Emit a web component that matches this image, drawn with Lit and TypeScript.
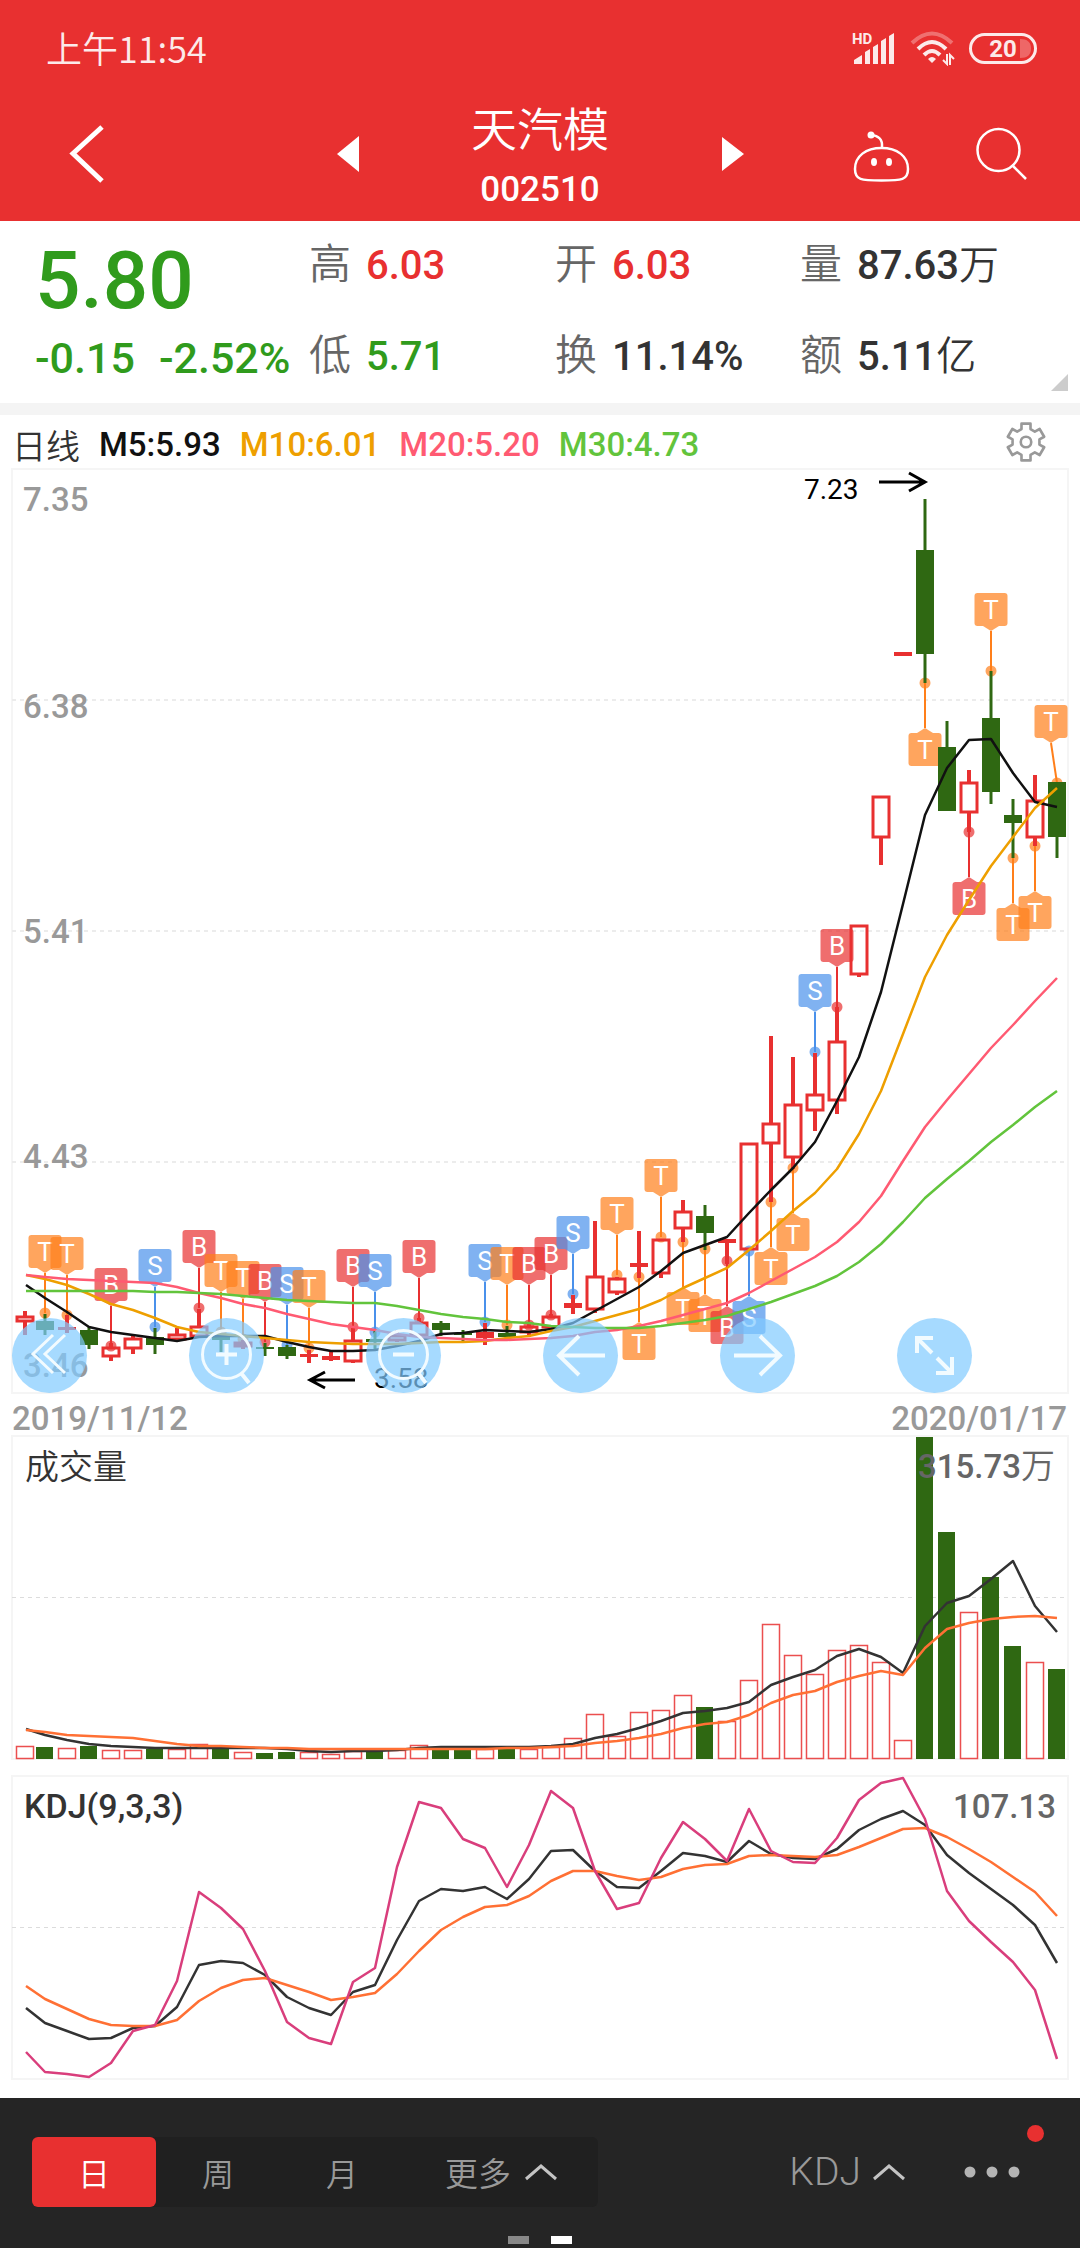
import { LitElement, html, svg, css } from "lit";
import { customElement, property, state } from "lit/decorators.js";

type Side = "up" | "down";
/** [high, body top, body bottom, low, direction, hollow] */
type Candle = [number, number, number, number, Side, boolean?];
/** [session index, letter, y of the anchor dot, flag below the candle, flag x shift] */
type Flag = [number, "T" | "S" | "B", number, boolean?, number?];

const RED = "#e83030";
const GREEN = "#2f6812";
const FLAG_COLORS = { T: "#ff7f1a", S: "#4a91eb", B: "#e83030" };

const xAt = (i: number) => (i === 0 ? 25 : 23 + 22 * i);

const CANDLES: Candle[] = [
  [1311, 1317, 1321, 1335, "up", true],
  [1314, 1321, 1330, 1335, "down"],
  [1315, 1327, 1330, 1333, "up"],
  [1327, 1330, 1345, 1349, "down"],
  [1343, 1348, 1356, 1361, "up", true],
  [1336, 1339, 1348, 1354, "up", true],
  [1328, 1337, 1345, 1354, "down"],
  [1328, 1335, 1339, 1341, "up", true],
  [1309, 1327, 1336, 1338, "up", true],
  [1333, 1336, 1340, 1352, "down"],
  [1340, 1343, 1346, 1349, "up", true],
  [1343, 1347, 1349, 1356, "down"],
  [1345, 1347, 1356, 1359, "down"],
  [1350, 1354, 1357, 1363, "up"],
  [1352, 1356, 1360, 1361, "up"],
  [1327, 1341, 1361, 1363, "up", true],
  [1330, 1339, 1342, 1350, "down"],
  [1330, 1336, 1340, 1342, "up", true],
  [1318, 1323, 1335, 1338, "up", true],
  [1321, 1323, 1330, 1336, "down"],
  [1330, 1333, 1335, 1341, "down"],
  [1323, 1332, 1338, 1345, "up"],
  [1326, 1333, 1337, 1339, "down"],
  [1322, 1327, 1332, 1337, "up", true],
  [1314, 1317, 1327, 1328, "up", true],
  [1295, 1303, 1308, 1314, "up"],
  [1221, 1277, 1309, 1313, "up", true],
  [1277, 1279, 1292, 1295, "up", true],
  [1231, 1263, 1267, 1278, "up"],
  [1239, 1240, 1273, 1278, "up", true],
  [1200, 1212, 1228, 1242, "up", true],
  [1205, 1216, 1233, 1250, "down"],
  [1240, 1239, 1243, 1264, "up"],
  [1143, 1144, 1249, 1250, "up", true],
  [1036, 1124, 1143, 1202, "up", true],
  [1057, 1105, 1157, 1169, "up", true],
  [1053, 1095, 1110, 1131, "up", true],
  [1007, 1042, 1100, 1114, "up", true],
  [925, 926, 974, 977, "up", true],
  [796, 797, 837, 865, "up", true],
  [652, 652, 656, 656, "up"],
  [499, 550, 654, 683, "down"],
  [721, 747, 811, 811, "down"],
  [770, 783, 812, 832, "up", true],
  [671, 718, 792, 804, "down"],
  [799, 815, 823, 858, "down"],
  [775, 801, 837, 846, "up", true],
  [782, 782, 837, 858, "down"],
];

const FLAGS: Flag[] = [
  [1, "T", 1313], [2, "T", 1315], [4, "B", 1346], [6, "S", 1327],
  [8, "B", 1308], [9, "T", 1332], [10, "T", 1339], [11, "B", 1342],
  [12, "S", 1345], [13, "T", 1348], [15, "B", 1327], [16, "S", 1332],
  [18, "B", 1318], [21, "S", 1322], [22, "T", 1325], [23, "B", 1325],
  [24, "B", 1315], [25, "S", 1294], [27, "T", 1275], [28, "T", 1277, true],
  [29, "T", 1237], [30, "T", 1242, true], [31, "T", 1249, true],
  [32, "B", 1261, true], [33, "S", 1251, true], [34, "T", 1202, true],
  [35, "T", 1168, true], [36, "S", 1052], [37, "B", 1007],
  [41, "T", 683, true], [43, "B", 832, true], [44, "T", 671],
  [45, "T", 858, true], [46, "T", 846, true], [47, "T", 783, false, -6],
];

const MA5 = [1285, 1298, 1312, 1327, 1332, 1335, 1338, 1341, 1337, 1336, 1336, 1336, 1342, 1347, 1351, 1351, 1350, 1346, 1341, 1334, 1333, 1330, 1331, 1332, 1329, 1323, 1311, 1299, 1287, 1271, 1253, 1245, 1237, 1213, 1190, 1168, 1142, 1101, 1057, 992, 904, 815, 768, 740, 739, 773, 802, 807];
const MA10 = [1275, 1279, 1285, 1294, 1304, 1310, 1318, 1327, 1332, 1334, 1336, 1338, 1340, 1342, 1343, 1344, 1344, 1344, 1343, 1342, 1342, 1341, 1338, 1336, 1331, 1327, 1321, 1315, 1309, 1300, 1288, 1278, 1268, 1250, 1231, 1211, 1193, 1169, 1134, 1091, 1034, 977, 935, 900, 866, 837, 808, 788];
const MA20 = [1275, 1277, 1279, 1280, 1281, 1282, 1283, 1287, 1293, 1298, 1304, 1308, 1314, 1319, 1324, 1327, 1330, 1334, 1337, 1338, 1339, 1340, 1340, 1339, 1338, 1336, 1332, 1330, 1326, 1321, 1315, 1309, 1303, 1293, 1281, 1269, 1257, 1242, 1222, 1196, 1161, 1127, 1100, 1074, 1048, 1025, 1001, 978];
const MA30 = [1291, 1291, 1291, 1291, 1291, 1291, 1292, 1292, 1293, 1294, 1296, 1298, 1300, 1301, 1302, 1303, 1303, 1306, 1310, 1314, 1317, 1319, 1322, 1323, 1326, 1327, 1328, 1328, 1328, 1326, 1323, 1320, 1316, 1309, 1302, 1294, 1286, 1276, 1262, 1244, 1222, 1198, 1179, 1161, 1142, 1125, 1107, 1091];

const VOLUME = [1746, 1747, 1748, 1746, 1750, 1750, 1749, 1749, 1744, 1749, 1752, 1753, 1752, 1752, 1754, 1751, 1751, 1750, 1745, 1750, 1750, 1749, 1749, 1749, 1747, 1738, 1714, 1736, 1712, 1710, 1695, 1707, 1721, 1680, 1624, 1655, 1674, 1650, 1645, 1662, 1740, 1437, 1532, 1612, 1577, 1646, 1662, 1669];
const VOLUME_DOWN = new Set([1, 3, 6, 9, 11, 12, 16, 19, 20, 22, 31, 41, 42, 44, 45, 47]);
const VOL_MA5 = [1729, 1735, 1740, 1744, 1746, 1747, 1748, 1748, 1748, 1748, 1748, 1748, 1749, 1751, 1752, 1751, 1751, 1750, 1748, 1747, 1747, 1747, 1747, 1747, 1746, 1744, 1738, 1734, 1728, 1721, 1713, 1711, 1708, 1702, 1685, 1677, 1670, 1656, 1649, 1657, 1673, 1626, 1603, 1596, 1579, 1561, 1606, 1632];
const VOL_MA10 = [1730, 1732, 1735, 1736, 1737, 1738, 1741, 1744, 1746, 1746, 1747, 1748, 1748, 1749, 1749, 1749, 1749, 1749, 1749, 1749, 1749, 1749, 1748, 1748, 1747, 1746, 1743, 1741, 1738, 1734, 1728, 1724, 1722, 1715, 1703, 1695, 1691, 1682, 1676, 1671, 1675, 1648, 1629, 1623, 1619, 1617, 1616, 1618];

/* KDJ samples: distance below the panel origin, in thirds of a chart unit. */
const K_LINE = [744, 790, 814, 836, 834, 804, 797, 740, 615, 603, 608, 646, 711, 744, 765, 695, 675, 540, 423, 387, 393, 381, 416, 357, 272, 270, 333, 380, 384, 333, 279, 288, 306, 243, 283, 295, 297, 267, 211, 177, 153, 195, 286, 339, 387, 435, 495, 610];
const D_LINE = [679, 718, 748, 777, 795, 798, 798, 780, 723, 684, 660, 655, 675, 696, 719, 711, 699, 643, 573, 510, 470, 441, 435, 408, 363, 333, 333, 348, 359, 350, 327, 315, 312, 288, 285, 288, 291, 285, 261, 234, 207, 204, 232, 268, 307, 350, 396, 467];
const J_LINE = [877, 936, 942, 951, 908, 812, 796, 663, 396, 444, 508, 633, 785, 834, 852, 665, 624, 322, 126, 144, 237, 264, 382, 256, 93, 145, 333, 447, 429, 294, 186, 236, 304, 147, 272, 306, 309, 234, 119, 69, 54, 177, 392, 484, 547, 606, 690, 898];
const kdj = (v: number[]) => v.map((n) => Math.round(1760 + n / 3));

const trend = (ys: number[], color: string) => svg`
  <polyline fill="none" stroke=${color} stroke-width="2.5" stroke-linejoin="round"
    points=${ys.map((y, i) => `${i ? xAt(i) : 26},${y}`).join(" ")}></polyline>`;

const sharedChart = css`
  :host { display: block; }
  svg.chart {
    display: block;
    width: 100%;
    height: auto;
    font-family: Roboto, "Noto Sans CJK SC", sans-serif;
    font-weight: 500;
    font-size: 33px;
  }
  .frame { fill: none; stroke: #f5f5f5; stroke-width: 2; }
  .dash { stroke: #ececec; stroke-width: 2; stroke-dasharray: 4 4; }
  .dash.fine { stroke: #dcdcdc; stroke-width: 1; }
  .axis { fill: #999; }
  .caption { fill: #333; font-size: 34px; }
  .cjk { font-weight: 350; font-size: 34px; }
  .peak { fill: #666; }
`;

@customElement("price-chart")
export class PriceChart extends LitElement {
  static styles = [
    sharedChart,
    css`
      :host { position: relative; }
      .mark { fill: #000; font-size: 28px; font-weight: 400; }
      .letter { fill: #fff; font-size: 26px; font-weight: 400; text-anchor: middle; }
      .arrow { fill: none; stroke: #000; stroke-width: 3; }
      .tools {
        position: absolute;
        left: 12px;
        right: 108px;
        bottom: 1px;
        display: flex;
        justify-content: space-between;
      }
      .tool {
        width: 75px;
        height: 75px;
        padding: 0;
        border: 0;
        border-radius: 50%;
        background: rgba(128, 202, 255, 0.7);
      }
      .tool svg {
        display: block;
        fill: none;
        stroke: #f2fbff;
        stroke-width: 4;
      }
      .tool .thin { stroke-width: 3; }
    `,
  ];

  private candle([high, top, bottom, low, side, hollow]: Candle, i: number) {
    const x = xAt(i);
    const color = side === "up" ? RED : GREEN;
    const wick = side === "up" ? 4 : 3;
    return svg`
      <line x1=${x} x2=${x} y1=${high} y2=${hollow ? top : low} stroke=${color} stroke-width=${wick}></line>
      ${hollow
        ? svg`<line x1=${x} x2=${x} y1=${bottom} y2=${low} stroke=${color} stroke-width=${wick}></line>
            <rect x=${x - 8} y=${top} width="16" height=${bottom - top} fill="none" stroke=${color} stroke-width="3"></rect>`
        : svg`<rect x=${x - 9} y=${top} width="18" height=${bottom - top} fill=${color}></rect>`}`;
  }

  private flag([i, letter, dot, below = false, shift = 0]: Flag) {
    const x = xAt(i);
    const cx = x + shift;
    const top = below ? dot + 50 : dot - 78;
    const edge = below ? top : top + 33;
    const tip = below ? top - 5 : top + 38;
    const color = FLAG_COLORS[letter];
    return svg`
      <line x1=${cx} y1=${tip} x2=${x} y2=${dot} stroke=${color} stroke-width="2"></line>
      <g fill=${color} fill-opacity="0.7">
        <circle cx=${x} cy=${dot} r="5.5"></circle>
        <rect x=${cx - 16.5} y=${top} width="33" height="33" rx="3"></rect>
        <path d="M${cx - 8} ${edge}L${cx} ${tip}L${cx + 8} ${edge}Z"></path>
      </g>
      <text class="letter" x=${cx} y=${top + 26}>${letter}</text>`;
  }

  private tool(label: string, art: unknown) {
    return html`<button class="tool" aria-label=${label}>
      <svg viewBox="0 0 75 75" width="75" height="75">${art}</svg>
    </button>`;
  }

  render() {
    return html`
      <svg class="chart" viewBox="0 468 1080 926" role="img" aria-label="日线">
        <rect class="frame" x="12" y="469" width="1056" height="924"></rect>
        ${[700, 931, 1162].map((y) => svg`<line class="dash" x1="12" x2="1068" y1=${y} y2=${y}></line>`)}
        ${FLAGS.map((f) => this.flag(f))}
        ${CANDLES.map((c, i) => this.candle(c, i))}
        ${trend(MA5, "#111")}${trend(MA10, "#ee9f00")}${trend(MA20, "#ff5a72")}${trend(MA30, "#62c43c")}
        <text class="axis" x="23" y="511">7.35</text>
        <text class="axis" x="23" y="718">6.38</text>
        <text class="axis" x="23" y="943">5.41</text>
        <text class="axis" x="23" y="1168">4.43</text>
        <text class="axis" x="23" y="1377">3.46</text>
        <text class="mark" x="804" y="499">7.23</text>
        <path class="arrow" d="M879 482H925M909 473L925 482L909 491"></path>
        <text class="mark" x="374" y="1388">3.58</text>
        <path class="arrow" d="M355 1380H310M325 1372L310 1380L325 1388"></path>
      </svg>
      <div class="tools">
        ${this.tool("最早", svg`<path class="thin" d="M53 17L33 36L53 55M41 17L21 36L41 55"></path>`)}
        ${this.tool("放大", svg`<circle class="thin" cx="37.5" cy="36.5" r="24"></circle><path d="M27 36.5H48M37.5 26V47M52 55L60 65"></path>`)}
        ${this.tool("缩小", svg`<circle class="thin" cx="37.5" cy="36.5" r="24"></circle><path d="M27 36.5H48M52 55L60 65"></path>`)}
        ${this.tool("左移", svg`<path d="M16 37.5H62M36 18L16 37.5L36 57"></path>`)}
        ${this.tool("右移", svg`<path d="M14 37.5H60M40 18L60 37.5L40 57"></path>`)}
        ${this.tool("全屏", svg`<path d="M20 35V20H36M20 20L35 35M39 55H55V39M55 55L40 40"></path>`)}
      </div>
    `;
  }
}

@customElement("volume-chart")
export class VolumeChart extends LitElement {
  static styles = sharedChart;

  render() {
    return html`
      <svg class="chart" viewBox="0 1435 1080 326" role="img" aria-label="成交量">
        <rect class="frame" x="12" y="1436" width="1056" height="323"></rect>
        <line class="dash fine" x1="12" x2="1068" y1="1597.5" y2="1597.5"></line>
        ${VOLUME.map((y, i) =>
          VOLUME_DOWN.has(i)
            ? svg`<rect x=${xAt(i) - 9} y=${y} width="17" height=${1759 - y} fill=${GREEN}></rect>`
            : svg`<rect x=${xAt(i) - 8.5} y=${y + 0.5} width="17" height=${1758 - y} fill="none" stroke=${RED} stroke-width="1.5" stroke-opacity="0.85"></rect>`
        )}
        ${trend(VOL_MA5, "#333")}${trend(VOL_MA10, "#ff7034")}
        <text class="caption cjk" x="25" y="1479">成交量</text>
        <text class="peak" x="1055" y="1478" text-anchor="end">315.73<tspan class="cjk">万</tspan></text>
      </svg>
    `;
  }
}

@customElement("kdj-chart")
export class KdjChart extends LitElement {
  static styles = sharedChart;

  render() {
    return html`
      <svg class="chart" viewBox="0 1775 1080 306" role="img" aria-label="KDJ">
        <rect class="frame" x="12" y="1776" width="1056" height="303"></rect>
        <line class="dash fine" x1="12" x2="1068" y1="1927.5" y2="1927.5"></line>
        ${trend(kdj(K_LINE), "#333")}${trend(kdj(D_LINE), "#ff7034")}${trend(kdj(J_LINE), "#d93e7c")}
        <text class="caption" x="24" y="1818">KDJ(9,3,3)</text>
        <text class="peak" x="1056" y="1818" text-anchor="end">107.13</text>
      </svg>
    `;
  }
}

@customElement("quote-item")
export class QuoteItem extends LitElement {
  @property() label = "";
  @property() value = "";
  @property() unit = "";
  @property({ reflect: true }) tone = "";

  static styles = css`
    :host {
      display: flex;
      align-items: baseline;
      align-self: center;
      gap: 15px;
      font-size: 40px;
      line-height: 60px;
      color: #333;
    }
    :host([tone="rise"]) { color: #e83030; }
    :host([tone="fall"]) { color: #309b1c; }
    .label { color: #666; font-size: 42px; line-height: 42px; font-weight: 350; }
    .value { font-weight: 500; }
    .unit { font-weight: 350; line-height: 40px; }
  `;

  render() {
    return html`<span class="label">${this.label}</span
      ><span class="value">${this.value}<span class="unit">${this.unit}</span></span>`;
  }
}

@customElement("app-root")
export class AppRoot extends LitElement {
  @state() private period = "日";

  static styles = css`
    :host {
      display: flex;
      flex-direction: column;
      min-height: 100vh;
      background: #fff;
      font-family: Roboto, "Noto Sans CJK SC", sans-serif;
      color: #333;
    }
    * { box-sizing: border-box; }
    button {
      margin: 0;
      padding: 0;
      border: 0;
      background: none;
      color: inherit;
      font: inherit;
    }
    svg { display: block; }
    header { background: #e83030; color: #fff; }
    .status {
      display: flex;
      align-items: center;
      height: 96px;
      padding: 0 43px 0 46px;
      opacity: 0.9;
    }
    .clock { flex: 1; font: 350 36px/48px "Noto Sans CJK SC", sans-serif; padding-bottom: 2px; }
    .icons { display: flex; align-items: center; gap: 14px; }
    .nav {
      display: grid;
      grid-template-columns: 1fr auto 1fr;
      grid-template-rows: 116px;
      align-items: center;
      height: 125px;
    }
    .side { display: flex; align-items: center; justify-content: space-between; }
    .side.left { padding: 0 0 0 60px; }
    .side.right { padding: 0 51px 0 0; }
    .titles { width: 363px; align-self: start; padding-top: 5px; text-align: center; }
    h1 { margin: 0; font-size: 46px; line-height: 58px; font-weight: 350; }
    .code { font-size: 35px; line-height: 62px; font-weight: 500; margin: 0; }
    .tools { display: flex; gap: 64px; align-items: center; }
    .quote {
      position: relative;
      display: grid;
      grid-template-columns: 274fr 246fr 245fr 280fr;
      grid-template-rows: 90px 92px;
      height: 182px;
      padding-left: 35px;
    }
    .last { grid-row: 1 / 3; color: #309b1c; font-weight: 500; }
    .price { font-size: 80px; line-height: 120px; }
    .change { display: flex; gap: 24px; font-size: 43px; line-height: 34px; }
    .corner {
      position: absolute;
      right: 12px;
      bottom: 12px;
      border-left: 17px solid transparent;
      border-bottom: 17px solid #ccc;
    }
    .band { height: 12px; background: #f4f4f4; }
    .legend {
      display: flex;
      align-items: center;
      gap: 19px;
      height: 53px;
      padding: 6px 33px 0 12px;
      font-size: 33px;
      font-weight: 500;
    }
    .legend .name { font-weight: 350; font-size: 34px; }
    .m5 { color: #111; }
    .m10 { color: #ee9f00; }
    .m20 { color: #ff5a72; }
    .m30 { color: #62c43c; }
    .gear { margin: -6px 0 0 auto; }
    .dates {
      display: flex;
      justify-content: space-between;
      padding: 4px 13px 0 12px;
      color: #999;
      font-size: 33px;
      font-weight: 500;
      line-height: 41px;
      height: 41px;
    }
    kdj-chart { margin-top: 14px; }
    footer {
      margin-top: auto;
      height: 150px;
      padding-top: 39px;
      background: #252525;
      color: #999;
      font-size: 34px;
      font-weight: 350;
    }
    .bar { display: flex; align-items: center; justify-content: space-between; padding: 0 50px 0 32px; }
    .periods { display: flex; height: 70px; border-radius: 6px; background: #202020; }
    .period { width: 124px; border-radius: 6px; font-size: 32px; }
    .period.on { background: #e83030; color: #fff; }
    .period.more { width: 194px; display: flex; align-items: center; justify-content: center; gap: 14px; font-size: 33px; }
    .extra { display: flex; align-items: center; gap: 59px; }
    .indicator { display: flex; align-items: center; gap: 12px; font-size: 39px; font-weight: 300; }
    .menu { position: relative; }
    .badge {
      position: absolute;
      right: -14px;
      top: -41px;
      width: 17px;
      height: 17px;
      border-radius: 50%;
      background: #e83030;
    }
    .pages { display: flex; justify-content: center; gap: 22px; padding-top: 29px; }
    .page { width: 21px; height: 8px; background: #888; }
    .page.on { background: #fff; }
  `;

  private chevron() {
    return html`<svg viewBox="0 0 32 18" width="32" height="18" fill="none" stroke="#c4c4c4" stroke-width="3">
      <path d="M1 16L16 3L31 16"></path>
    </svg>`;
  }

  private gearPath() {
    const pts: string[] = [];
    for (let i = 0; i < 6; i++) {
      const a = (i * Math.PI) / 3 - Math.PI / 2;
      for (const [da, r] of [[-0.34, 13], [-0.24, 18], [0.24, 18], [0.34, 13]]) {
        pts.push(`${(20 + r * Math.cos(a + da)).toFixed(1)} ${(20 + r * Math.sin(a + da)).toFixed(1)}`);
      }
    }
    return `M${pts.join("L")}Z`;
  }

  render() {
    return html`
      <header>
        <div class="status">
          <span class="clock">上午11:54</span>
          <div class="icons">
            <svg viewBox="854 30 44 34" width="44" height="34" fill="#fff">
              <text x="854" y="43" font-size="15" font-weight="700">HD</text>
              <path d="M856 63V59L864 54V63ZM867 63V51L872 48V63ZM875 63V46L880 43V63ZM883 63V40L888 37V63ZM891 63V35L896 32V63Z"></path>
            </svg>
            <svg viewBox="911 31 45 36" width="45" height="36" fill="none" stroke="#fff" stroke-width="4">
              <path d="M913 44Q933 25 953 44" stroke-opacity="0.35"></path>
              <path d="M919 50Q933 36 947 50"></path>
              <path d="M925 56Q933 48 941 56"></path>
              <path d="M929 60Q933 56 937 60L933 64Z" fill="#fff" stroke="none"></path>
              <path d="M948 55V65L944 61M951 66V56L955 60" stroke-width="2"></path>
            </svg>
            <svg viewBox="970 32 68 31" width="68" height="31">
              <rect x="971.5" y="33.5" width="65" height="28" rx="14" fill="none" stroke="#fff" stroke-width="3"></rect>
              <path d="M1021 38Q1032 38 1032 47.500Q1032 57 1021 57Z" fill="#fff" fill-opacity="0.3"></path>
              <text x="1004" y="56" font-size="24" font-weight="700" fill="#fff" text-anchor="middle">20</text>
            </svg>
          </div>
        </div>
        <div class="nav">
          <div class="side left">
            <button aria-label="返回">
              <svg viewBox="60 120 56 66" width="56" height="66" fill="none" stroke="#fff" stroke-width="5">
                <path d="M102 126L73 152.500L102 180"></path>
              </svg>
            </button>
            <button aria-label="上一只">
              <svg viewBox="336 136 22 36" width="22" height="36" fill="#fff"><path d="M336 154L358 136V172Z"></path></svg>
            </button>
          </div>
          <div class="titles">
            <h1>天汽模</h1>
            <p class="code">002510</p>
          </div>
          <div class="side right">
            <button aria-label="下一只">
              <svg viewBox="721 136 22 36" width="22" height="36" fill="#fff"><path d="M743 154L721 137V171Z"></path></svg>
            </button>
            <div class="tools">
              <button aria-label="助手">
                <svg viewBox="854 126 58 56" width="58" height="56" fill="none" stroke="#fff" stroke-width="2.500">
                  <path d="M872 135Q884 136 883 147"></path>
                  <path d="M882.500 148C898 148 909 156 909 169C909 180 903 180.500 882.500 180.500C862 180.500 856 180 856 169C856 156 867 148 882.500 148Z"></path>
                  <circle cx="872" cy="135" r="3.500" fill="#fff" stroke="none"></circle>
                  <ellipse cx="875" cy="162" rx="3" ry="4" fill="#fff" stroke="none"></ellipse>
                  <ellipse cx="890" cy="162" rx="3" ry="4" fill="#fff" stroke="none"></ellipse>
                </svg>
              </button>
              <button aria-label="搜索">
                <svg viewBox="976 127 54 56" width="54" height="56" fill="none" stroke="#fff" stroke-width="2.500">
                  <circle cx="999.500" cy="151" r="21"></circle><path d="M1013 166L1027 180"></path>
                </svg>
              </button>
            </div>
          </div>
        </div>
      </header>

      <section class="quote">
        <div class="last">
          <div class="price">5.80</div>
          <div class="change"><span>-0.15</span><span>-2.52%</span></div>
        </div>
        <quote-item label="高" value="6.03" tone="rise"></quote-item>
        <quote-item label="开" value="6.03" tone="rise"></quote-item>
        <quote-item label="量" value="87.63" unit="万"></quote-item>
        <quote-item label="低" value="5.71" tone="fall"></quote-item>
        <quote-item label="换" value="11.14%"></quote-item>
        <quote-item label="额" value="5.11" unit="亿"></quote-item>
        <span class="corner"></span>
      </section>
      <div class="band"></div>

      <div class="legend">
        <span class="name">日线</span>
        <span class="m5">M5:5.93</span>
        <span class="m10">M10:6.01</span>
        <span class="m20">M20:5.20</span>
        <span class="m30">M30:4.73</span>
        <button class="gear" aria-label="设置">
          <svg viewBox="0 0 40 40" width="42" height="42" fill="none" stroke="#999" stroke-width="2.500" stroke-linejoin="round">
            <path d=${this.gearPath()}></path><circle cx="20" cy="20" r="5"></circle>
          </svg>
        </button>
      </div>

      <price-chart></price-chart>
      <div class="dates"><span>2019/11/12</span><span>2020/01/17</span></div>
      <volume-chart></volume-chart>
      <kdj-chart></kdj-chart>

      <footer>
        <div class="bar">
          <div class="periods">
            ${["日", "周", "月"].map(
              (p) => html`<button class="period ${p === this.period ? "on" : ""}" @click=${() => (this.period = p)}>${p}</button>`
            )}
            <button class="period more">更多${this.chevron()}</button>
          </div>
          <div class="extra">
            <button class="indicator">KDJ${this.chevron()}</button>
            <button class="menu" aria-label="菜单">
              <svg viewBox="0 0 66 12" width="66" height="12" fill="#b4b4b4">
                <circle cx="6" cy="6" r="5.500"></circle><circle cx="28" cy="6" r="5.500"></circle><circle cx="50" cy="6" r="5.500"></circle>
              </svg>
              <span class="badge"></span>
            </button>
          </div>
        </div>
        <div class="pages"><span class="page"></span><span class="page on"></span></div>
      </footer>
    `;
  }
}
